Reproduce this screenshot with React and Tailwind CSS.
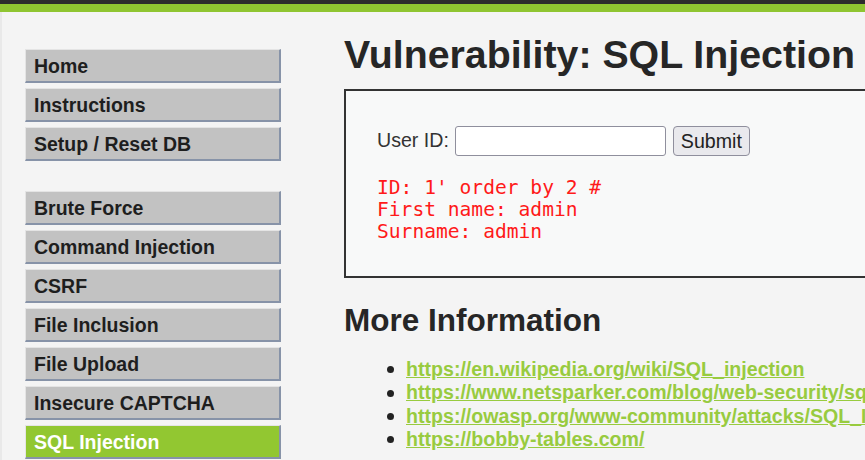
import React from "react";

const group1 = ["Home", "Instructions", "Setup / Reset DB"];
const group2 = [
  "Brute Force",
  "Command Injection",
  "CSRF",
  "File Inclusion",
  "File Upload",
  "Insecure CAPTCHA",
  "SQL Injection",
];

const links = [
  "https://en.wikipedia.org/wiki/SQL_injection",
  "https://www.netsparker.com/blog/web-security/sql-injection-cheat-sheet/",
  "https://owasp.org/www-community/attacks/SQL_Injection",
  "https://bobby-tables.com/",
];

function MenuItem({ label, active }) {
  return (
    <div
      className={
        "h-[34px] flex items-center pl-[8px] border-t border-l border-r-2 border-b-2 border-t-[#e4e4e4] border-l-[#e4e4e4] border-r-[#8793a8] border-b-[#8793a8] text-[19.5px] leading-[22px] font-bold whitespace-nowrap " +
        (active ? "bg-[#92c731] text-white" : "bg-[#c2c2c2] text-[#1e1e1e]")
      }
    >
      {label}
    </div>
  );
}

export default function App() {
  return (
    <div className="w-[865px] h-[460px] overflow-hidden bg-[#f4f4f4] font-['Liberation_Sans',Arial,sans-serif]">
      <div className="h-[4px] bg-[#2c2c2c]" />
      <div className="h-[8px] bg-[#8fc531]" />
      <div className="flex h-[448px] border-l-2 border-[#e9e9e9]">
        <nav className="w-[256px] shrink-0 ml-[23px] pt-[37px] flex flex-col">
          <div className="flex flex-col gap-[5px]">
            {group1.map((l) => (
              <MenuItem key={l} label={l} />
            ))}
          </div>
          <div className="flex flex-col gap-[5px] mt-[30px]">
            {group2.map((l) => (
              <MenuItem key={l} label={l} active={l === "SQL Injection"} />
            ))}
          </div>
        </nav>
        <main className="ml-[63px] shrink-0 w-[600px]">
          <h1 className="mt-[20px] text-[39.3px] leading-[44px] font-bold text-[#262626] whitespace-nowrap">
            Vulnerability: SQL Injection
          </h1>
          <div className="mt-[13px] w-[560px] border-2 border-[#333333] bg-[#f8f9f9] pt-[35px] pl-[31px] pb-[32px]">
            <div className="flex items-center">
              <span className="text-[19.6px] text-[#333333]">User ID:</span>
              <div className="ml-[6px] w-[211px] h-[30px] border border-[#8f8f9d] rounded-[3px] bg-white" />
              <button className="ml-[7px] w-[77px] h-[30px] bg-[#e9e9ed] border border-[#8f8f9d] rounded-[4px] text-[19.6px] text-[#222222] font-['Liberation_Sans',Arial,sans-serif]">
                Submit
              </button>
            </div>
            <pre className="mt-[20.6px] font-['DejaVu_Sans_Mono',monospace] text-[19.6px] leading-[22.4px] text-[#ff1a1a]">
{`ID: 1' order by 2 #
First name: admin
Surname: admin`}
            </pre>
          </div>
          <h2 className="mt-[24.5px] text-[31.5px] leading-[36px] font-bold text-[#262626] whitespace-nowrap">
            More Information
          </h2>
          <ul className="mt-[20px] flex flex-col">
            {links.map((l) => (
              <li key={l} className="flex items-center h-[23.2px] whitespace-nowrap">
                <span className="ml-[42.5px] w-[7px] h-[7px] rounded-full bg-[#222222] shrink-0" />
                <a className="ml-[12.5px] text-[19.6px] font-bold text-[#98cb3f] underline">
                  {l}
                </a>
              </li>
            ))}
          </ul>
        </main>
      </div>
    </div>
  );
}
